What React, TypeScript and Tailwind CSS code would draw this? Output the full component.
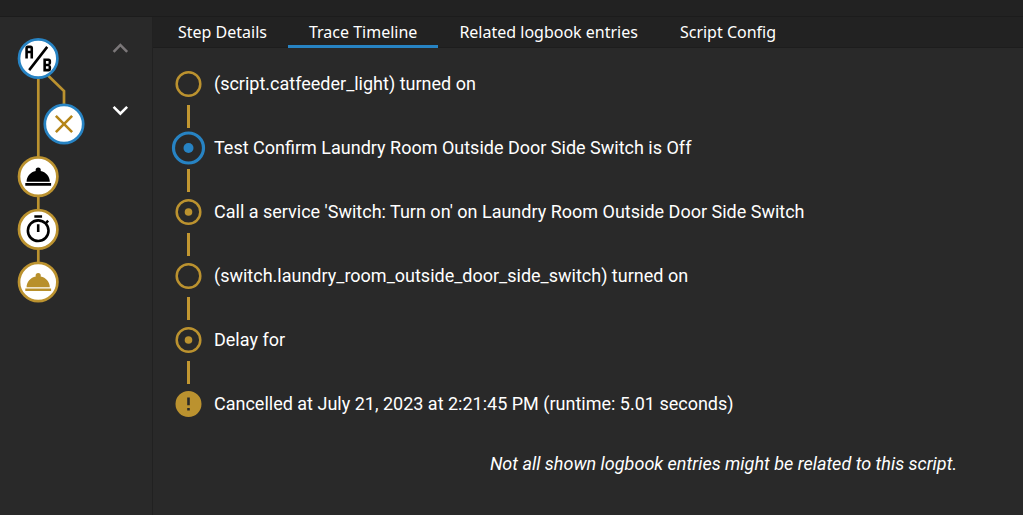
const GOLD = "#bb922f";
const BLUE = "#2783c3";

const paths = {
  ab: "M4 2A2 2 0 0 0 2 4V12H4V8H6V12H8V4A2 2 0 0 0 6 2H4M4 4H6V6H4M22 15.5V14A2 2 0 0 0 20 12H16V22H20A2 2 0 0 0 22 20V18.5A1.54 1.54 0 0 0 20.5 17A1.54 1.54 0 0 0 22 15.5M20 20H18V18H20V20M20 16H18V14H20M5.79 21.61L4.21 20.39L18.21 2.39L19.79 3.61Z",
  close:
    "M19 6.41L17.59 5L12 10.59L6.41 5L5 6.41L10.59 12L5 17.59L6.41 19L12 13.41L17.59 19L19 17.59L13.41 12Z",
  service:
    "M12 5A2 2 0 0 1 14 7C14 7.24 13.96 7.47 13.88 7.69C17.95 8.5 21 11.91 21 16H3C3 11.91 6.05 8.5 10.12 7.69C10.04 7.47 10 7.24 10 7A2 2 0 0 1 12 5M22 19H2V17H22V19Z",
  timer:
    "M12 20A7 7 0 0 1 5 13A7 7 0 0 1 12 6A7 7 0 0 1 19 13A7 7 0 0 1 12 20M19.03 7.39L20.45 5.97C20 5.46 19.55 5 19.04 4.56L17.62 6C16.07 4.74 14.12 4 12 4A9 9 0 0 0 3 13A9 9 0 0 0 12 22C17 22 21 17.97 21 13C21 10.88 20.26 8.93 19.03 7.39M11 14H13V8H11M15 1H9V3H15V1Z",
  up: "M7.41 15.41L12 10.83L16.59 15.41L18 14L12 8L6 14Z",
  down: "M7.41 8.58L12 13.17L16.59 8.58L18 10L12 16L6 10Z",
  alert:
    "M13 13H11V7H13M13 17H11V15H13M12 2A10 10 0 0 0 2 12A10 10 0 0 0 12 22A10 10 0 0 0 22 12A10 10 0 0 0 12 2Z",
};

type GraphNode = { x: number; y: number; ring: string; fill: string; icon: string };

const nodes: GraphNode[] = [
  { x: 22.2, y: 21.5, ring: BLUE, fill: "#000", icon: paths.ab },
  { x: 48, y: 87, ring: BLUE, fill: "#b58518", icon: paths.close },
  { x: 22.2, y: 139.6, ring: GOLD, fill: "#000", icon: paths.service },
  { x: 22.2, y: 192.4, ring: GOLD, fill: "#000", icon: paths.timer },
  { x: 22.2, y: 245, ring: GOLD, fill: "#b8902b", icon: paths.service },
];

function TraceGraph() {
  return (
    <svg width="70" height="268" viewBox="0 0 70 268" role="img" aria-label="Script graph">
      <path
        d="M22.3 22V245M22.3 29L48 54V87"
        fill="none"
        stroke={GOLD}
        strokeWidth="2.7"
      />
      {nodes.map((n, i) => (
        <g key={i} transform={`translate(${n.x} ${n.y})`}>
          <circle r="19.2" fill="#fff" stroke={n.ring} strokeWidth="2.7" />
          <path d={n.icon} fill={n.fill} transform="scale(1.29) translate(-12 -12)" />
        </g>
      ))}
    </svg>
  );
}

const tabs = ["Step Details", "Trace Timeline", "Related logbook entries", "Script Config"];

type Kind = "open" | "dot" | "selected" | "alert";

const entries: { kind: Kind; text: string }[] = [
  { kind: "open", text: "(script.catfeeder_light) turned on" },
  { kind: "selected", text: "Test Confirm Laundry Room Outside Door Side Switch is Off" },
  { kind: "dot", text: "Call a service 'Switch: Turn on' on Laundry Room Outside Door Side Switch" },
  { kind: "open", text: "(switch.laundry_room_outside_door_side_switch) turned on" },
  { kind: "dot", text: "Delay for" },
  { kind: "alert", text: "Cancelled at July 21, 2023 at 2:21:45 PM (runtime: 5.01 seconds)" },
];

function Marker({ kind }: { kind: Kind }) {
  const selected = kind === "selected";
  const color = selected ? BLUE : GOLD;
  return (
    <svg width="37" height="36" viewBox="-18.5 -18 37 36" aria-hidden="true" className="shrink-0">
      {kind === "alert" ? (
        <path d={paths.alert} fill={color} transform="scale(1.3) translate(-12 -12)" />
      ) : (
        <circle
          r={selected ? 15 : 11.8}
          fill="none"
          stroke={color}
          strokeWidth={selected ? 3.2 : 2.5}
        />
      )}
      {kind === "dot" && <circle r="3.8" fill={color} />}
      {selected && <circle r="5" fill={color} />}
    </svg>
  );
}

export default function App() {
  return (
    <div className="flex min-h-screen flex-col bg-[#292929] font-['Roboto',sans-serif] text-white">
      <header className="h-[17px] border-b border-[#1c1c1c] bg-[#222222]" />
      <div className="flex grow">
        <aside className="flex w-[153px] shrink-0 items-start justify-between border-r border-[#212121] pt-5 pr-[15px] pl-4">
          <TraceGraph />
          <div className="-mt-1 flex flex-col gap-[30px]">
            <button type="button" disabled aria-label="Previous step" className="text-[#7b7779]">
              <svg width="32" height="32" viewBox="0 0 25 25" fill="currentColor">
                <path d={paths.up} />
              </svg>
            </button>
            <button type="button" aria-label="Next step">
              <svg width="32" height="32" viewBox="0 0 25 25" fill="currentColor">
                <path d={paths.down} />
              </svg>
            </button>
          </div>
        </aside>
        <main className="min-w-0 grow">
          <div
            role="tablist"
            className="flex h-[31px] border-b border-[#1d1d1d] bg-[#222222] pl-1 font-['Noto_Sans',sans-serif] text-base leading-[26px]"
          >
            {tabs.map((t, i) => (
              <button
                key={t}
                type="button"
                role="tab"
                aria-selected={i === 1}
                className={
                  i === 1
                    ? "h-[31px] border-b-[3px] border-[#2783c3] px-[21px] pt-0.5"
                    : "h-[31px] border-b-[3px] border-transparent px-[21px] pt-0.5"
                }
              >
                {t}
              </button>
            ))}
          </div>
          <ol className="pt-[18px] pl-[17px] text-lg leading-9">
            {entries.map((e, i) => (
              <li key={e.text}>
                <div className="flex items-center gap-[7px]">
                  <Marker kind={e.kind} />
                  <span>{e.text}</span>
                </div>
                {i < entries.length - 1 && (
                  <div className="flex h-7 w-[37px] items-center justify-center">
                    <div className="h-[23px] w-[3px] bg-[#c29731]" />
                  </div>
                )}
              </li>
            ))}
          </ol>
          <p className="mt-7 pr-[66px] text-right text-lg italic">
            Not all shown logbook entries might be related to this script.
          </p>
        </main>
      </div>
    </div>
  );
}
